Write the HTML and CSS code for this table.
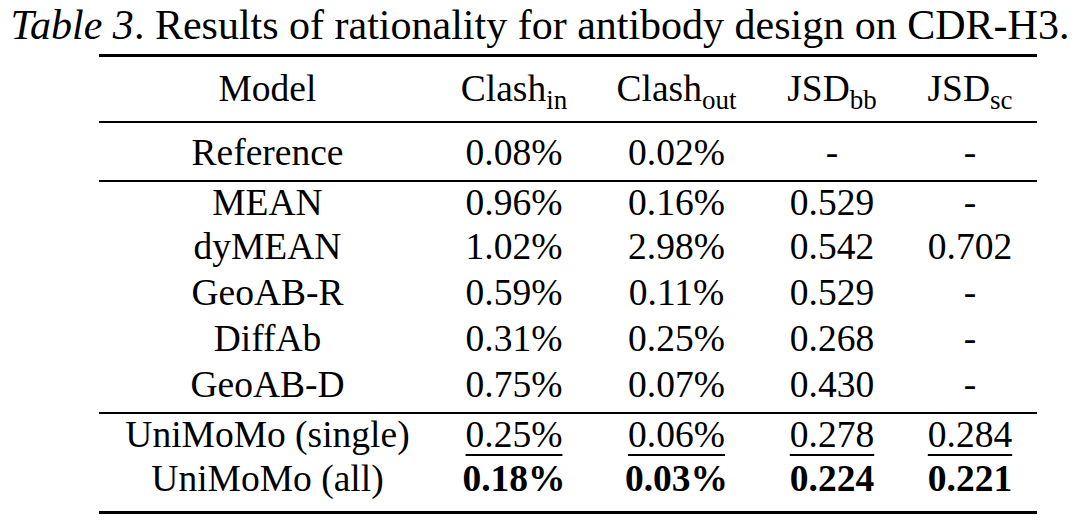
FILE: index.html
```html
<!DOCTYPE html>
<html>
<head>
<meta charset="utf-8">
<link rel="stylesheet" href="styles.css">
</head>
<body>
<div class="figure">
  <p class="caption"><em>Table 3</em>. Results of rationality for antibody design on CDR-H3.</p>
  <table class="results">
    <colgroup>
      <col class="c-model"><col class="c-in"><col class="c-out"><col class="c-bb"><col class="c-sc">
    </colgroup>
    <thead>
      <tr class="head">
        <th>Model</th>
        <th>Clash<sub>in</sub></th>
        <th>Clash<sub>out</sub></th>
        <th>JSD<sub>bb</sub></th>
        <th>JSD<sub>sc</sub></th>
      </tr>
    </thead>
    <tbody class="ref">
      <tr><td>Reference</td><td>0.08%</td><td>0.02%</td><td>-</td><td>-</td></tr>
    </tbody>
    <tbody class="baselines">
      <tr class="first"><td>MEAN</td><td>0.96%</td><td>0.16%</td><td>0.529</td><td>-</td></tr>
      <tr><td>dyMEAN</td><td>1.02%</td><td>2.98%</td><td>0.542</td><td>0.702</td></tr>
      <tr><td>GeoAB-R</td><td>0.59%</td><td>0.11%</td><td>0.529</td><td>-</td></tr>
      <tr><td>DiffAb</td><td>0.31%</td><td>0.25%</td><td>0.268</td><td>-</td></tr>
      <tr class="last"><td>GeoAB-D</td><td>0.75%</td><td>0.07%</td><td>0.430</td><td>-</td></tr>
    </tbody>
    <tbody class="ours">
      <tr class="first"><td>UniMoMo (single)</td><td><span class="second">0.25%</span></td><td><span class="second">0.06%</span></td><td><span class="second">0.278</span></td><td><span class="second">0.284</span></td></tr>
      <tr class="last"><td>UniMoMo (all)</td><td class="best">0.18%</td><td class="best">0.03%</td><td class="best">0.224</td><td class="best">0.221</td></tr>
    </tbody>
  </table>
</div>
</body>
</html>
```
FILE: styles.css
```css
html, body {
  margin: 0;
  padding: 0;
  background: #ffffff;
}
body {
  width: 1080px;
  height: 524px;
  overflow: hidden;
  font-family: "Liberation Serif", "Times New Roman", serif;
  color: #000;
}
.caption {
  margin: 0;
  height: 54px;
  font-size: 42px;
  line-height: 50px;
  text-align: center;
  white-space: nowrap;
}
.caption em {
  font-style: italic;
}
.results {
  margin-left: 99px;
  border-collapse: collapse;
  width: 938px;
  table-layout: fixed;
  font-size: 37.5px;
  border-top: 3px solid #000;
  border-bottom: 3px solid #000;
}
.c-model { width: 337px; }
.c-in { width: 156px; }
.c-out { width: 169px; }
.c-bb { width: 142px; }
.c-sc { width: 134px; }
.results th,
.results td {
  padding: 0;
  text-align: center;
  font-weight: normal;
  line-height: 46px;
  white-space: nowrap;
}
.results sub {
  font-size: 0.72em;
  line-height: 0;
  vertical-align: -0.28em;
}
.head th {
  padding-top: 9px;
  padding-bottom: 9px;
  border-bottom: 2px solid #000;
}
.ref td {
  padding-top: 7px;
  padding-bottom: 4px;
  border-bottom: 2px solid #000;
}
.baselines tr.first td {
  line-height: 42px;
}
.baselines tr.last td {
  padding-bottom: 4px;
  border-bottom: 2px solid #000;
}
.ours tr.first td {
  line-height: 42px;
}
.ours tr.last td {
  padding-bottom: 9px;
}
.second {
  text-decoration: underline;
  text-decoration-thickness: 1.5px;
  text-underline-offset: 7px;
}
.results td.best {
  font-weight: bold;
}
```
